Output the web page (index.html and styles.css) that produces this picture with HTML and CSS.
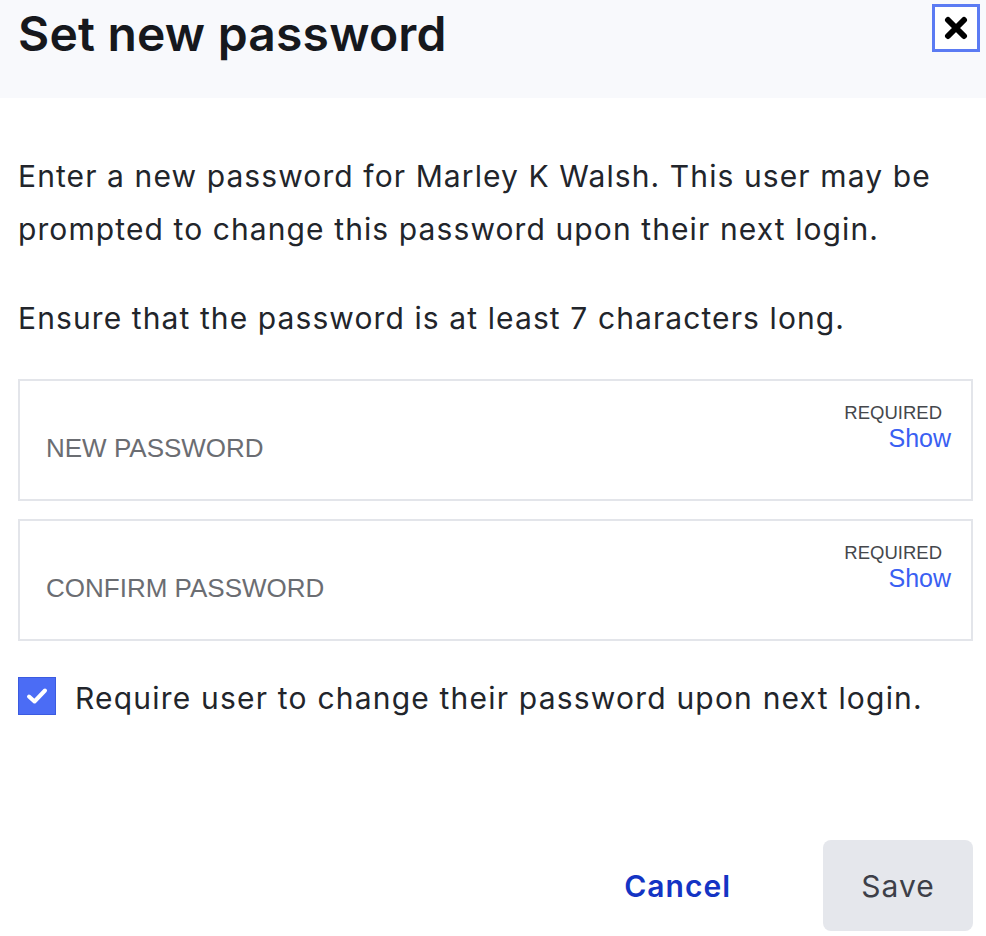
FILE: index.html
```html
<!DOCTYPE HTML>
<html>
<head>
<meta charset="utf-8">
<title>Set new password</title>
<link rel="stylesheet" href="styles.css">
</head>
<body>
<div class="modal">
	<div class="modal-head">
		<h1 class="modal-title">Set new password</h1>
		<a href="javascript:;" class="btn-close" title="Close">
			<svg width="28" height="24" viewBox="0 0 28 24"><path d="M6 4L22 20M22 4L6 20" stroke="#000" stroke-width="6" stroke-linecap="round" fill="none"/></svg>
		</a>
	</div>
	<div class="modal-body">
		<p class="intro">Enter a new password for Marley K Walsh. This user may be prompted to change this password upon their next login.</p>
		<p class="rule">Ensure that the password is at least 7 characters long.</p>

		<div class="field">
			<span class="field-label">NEW PASSWORD</span>
			<div class="field-side">
				<span class="req">REQUIRED</span>
				<a href="javascript:;" class="show">Show</a>
			</div>
		</div>
		<div class="field">
			<span class="field-label">CONFIRM PASSWORD</span>
			<div class="field-side">
				<span class="req">REQUIRED</span>
				<a href="javascript:;" class="show">Show</a>
			</div>
		</div>

		<label class="check">
			<span class="check-box">
				<svg width="22" height="18" viewBox="0 0 22 18"><path d="M3 9.5L8.5 14.5L19 3.5" stroke="#fff" stroke-width="4" stroke-linecap="round" stroke-linejoin="round" fill="none"/></svg>
			</span>
			<span class="check-text">Require user to change their password upon next login.</span>
		</label>
	</div>
	<div class="modal-foot">
		<a href="javascript:;" class="btn-cancel">Cancel</a>
		<a href="javascript:;" class="btn-save">Save</a>
	</div>
</div>
</body>
</html>
```
FILE: styles.css
```css
* {margin:0; padding:0; box-sizing:border-box;}
body {background:#fff; font-family:Inter, Lato, sans-serif; color:#1d1f24;}
a {text-decoration:none;}

.modal {width:986px; height:936px; display:flex; flex-direction:column;}

.modal-head {height:98px; background:#f8f9fc; display:flex; justify-content:space-between; align-items:flex-start; padding:4px 6px 0 18px;}
.modal-title {font-size:48px; font-weight:600; line-height:58px; padding-top:1px; color:#16181d; letter-spacing:0.2px;}
.btn-close {width:48px; height:48px; border:3px solid #5b7bf3; background:#fff; display:flex; align-items:center; justify-content:center;}

.modal-body {padding:0 13px 0 18px; flex:1;}
.modal-body p {font-size:30px; line-height:53px; letter-spacing:1.1px; color:#22252b;}
.intro {margin-top:52px;}
.rule {margin-top:36px;}

.field {height:122px; border:2px solid #e3e5ea; margin-top:34px; display:flex; justify-content:space-between; padding:0 20px 0 26px; font-family:"Liberation Sans", Arial, sans-serif;}
.field + .field {margin-top:18px;}
.field-label {align-self:center; margin-top:16px; font-size:26px; color:#6b6d72;}
.field-side {display:flex; flex-direction:column; align-items:flex-end; padding-top:21px;}
.req {font-size:18.5px; color:#45474c; line-height:22px; margin-right:9px;}
.show {font-size:25px; color:#3a60f2; line-height:28px;}

.check {display:flex; align-items:center; gap:19px; margin-top:35px;}
.check-box {width:38px; height:38px; background:#4b6cf5; border:1px solid #3b5be0; display:flex; align-items:center; justify-content:center;}
.check-text {font-size:30px; letter-spacing:1.2px; color:#22252b; padding-top:4px;}

.modal-foot {display:flex; justify-content:flex-end; align-items:center; padding:0 13px 5px 0; gap:92px;}
.btn-cancel {font-size:30px; font-weight:600; color:#1434c4; letter-spacing:1px;}
.btn-save {width:150px; height:91px; background:#e5e7ec; border-radius:8px; display:flex; align-items:center; justify-content:center; font-size:30px; color:#3d3f48; letter-spacing:1px;}
```
